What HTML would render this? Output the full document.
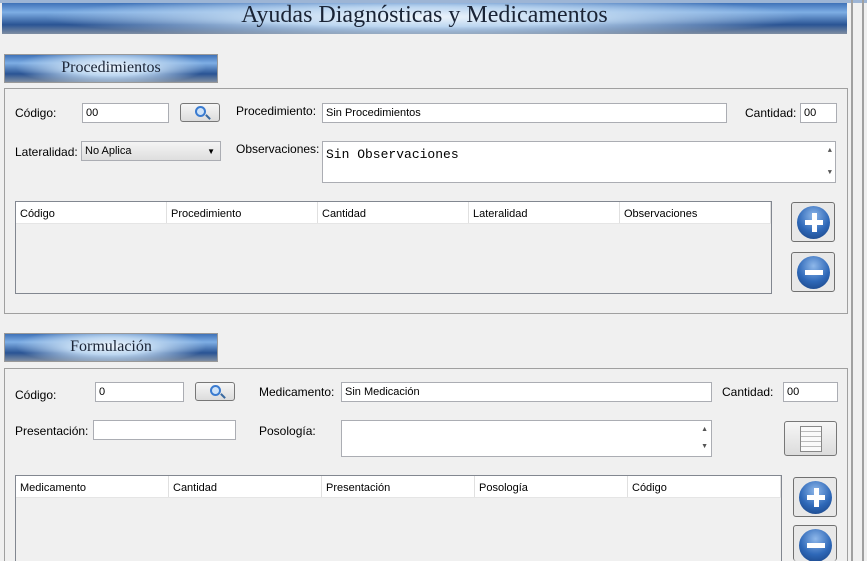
<!DOCTYPE html>
<html style="margin:0;width:867px;height:561px;overflow:hidden"><head><meta charset="utf-8"><style>
*{box-sizing:border-box}
body{margin:0;width:867px;height:561px;overflow:hidden;background:#f0f0f0;font-family:"Liberation Sans",sans-serif;font-size:12px;color:#000;position:relative}
.a{position:absolute}
.bg{background:radial-gradient(ellipse 45% 70% at 50% 45%,#eef5fc 0%,#bcd6f0 45%,rgba(120,160,210,0) 100%),linear-gradient(180deg,#3f72b8 0%,#7eaee4 30%,#2a5494 70%,#7f8ea2 100%)}
.title{font-family:"Liberation Serif",serif;color:#1a2436;text-align:center}
.in{background:#fff;border:1px solid #abadb3;padding:2px 3px;font-size:11px;height:20px;line-height:14px}
.lbl{font-size:12px}
.btn{border:1px solid #777;border-radius:3px;background:linear-gradient(#f6f6f6,#dcdcdc)}
.grid{border:1px solid #828790;background:#f0f0f0;overflow:hidden}
.hdr{height:22px;background:#fff;border-bottom:1px solid #e5e5e5;display:flex}
.hdr div{flex:1;border-right:1px solid #e0e0e0;padding:6px 4px;font-size:11px}
.rb{width:44px;height:40px;border:1px solid #707070;border-radius:3px;background:#e8e8e8;overflow:hidden}
.circ{position:absolute;left:5px;top:3px;width:33px;height:33px;border-radius:50%;background:radial-gradient(circle at 50% 30%,#8fb8ea 0%,#2e68b8 55%,#173e7c 100%)}
.mag{position:absolute;left:14px;top:2px;width:11px;height:11px;border:2px solid #3a7bd0;border-radius:50%;background:#cfe3f8}
.mag:after{content:"";position:absolute;left:8px;top:8px;width:6px;height:2px;background:#3a6aa0;transform:rotate(45deg)}
</style></head><body>
<div class="a" style="left:0;top:0;width:867px;height:3px;background:#9db5d5"></div>
<div class="a bg" style="left:2px;top:3px;width:845px;height:31px"></div>
<div class="a title" style="left:2px;top:1px;width:845px;font-size:24px;line-height:28px">Ayudas Diagnósticas y Medicamentos</div>
<div class="a" style="left:851px;top:0;width:2px;height:561px;background:#a0a0a0"></div>
<div class="a" style="left:862px;top:0;width:2px;height:561px;background:#a0a0a0"></div>

<div class="a bg" style="left:4px;top:54px;width:214px;height:29px;border:1px solid #999"></div>
<div class="a title" style="left:4px;top:59px;width:214px;font-size:16px">Procedimientos</div>
<div class="a" style="left:4px;top:88px;width:844px;height:226px;border:1px solid #a0a0a0"></div>
<div class="a lbl" style="left:15px;top:106px">Código:</div>
<div class="a in" style="left:82px;top:103px;width:87px">00</div>
<div class="a btn" style="left:180px;top:103px;width:40px;height:19px"><div class="mag"></div></div>
<div class="a lbl" style="left:236px;top:104px">Procedimiento:</div>
<div class="a in" style="left:322px;top:103px;width:405px">Sin Procedimientos</div>
<div class="a lbl" style="left:745px;top:106px">Cantidad:</div>
<div class="a in" style="left:800px;top:103px;width:37px">00</div>
<div class="a lbl" style="left:15px;top:145px">Lateralidad:</div>
<div class="a in" style="left:81px;top:141px;width:140px;background:linear-gradient(#f4f4f4,#dedede)">No Aplica<span style="position:absolute;right:5px;top:3px;font-size:8px">&#9660;</span></div>
<div class="a lbl" style="left:236px;top:142px">Observaciones:</div>
<div class="a in" style="left:322px;top:141px;width:514px;height:42px;font-family:'Liberation Mono',monospace;font-size:13px;padding-top:6px">Sin Observaciones<span style="position:absolute;right:3px;top:2px;font-size:7px;color:#555">&#9650;</span><span style="position:absolute;right:3px;bottom:2px;font-size:7px;color:#555">&#9660;</span></div>
<div class="a grid" style="left:15px;top:201px;width:757px;height:93px"><div class="hdr"><div>Código</div><div>Procedimiento</div><div>Cantidad</div><div>Lateralidad</div><div>Observaciones</div></div></div>
<div class="a rb" style="left:791px;top:202px"><div class="circ"></div><div class="a" style="left:13px;top:17px;width:18px;height:5px;background:#fff"></div><div class="a" style="left:19.5px;top:10px;width:5px;height:19px;background:#fff"></div></div>
<div class="a rb" style="left:791px;top:252px"><div class="circ"></div><div class="a" style="left:13px;top:17px;width:18px;height:5px;background:#fff"></div></div>

<div class="a bg" style="left:4px;top:333px;width:214px;height:29px;border:1px solid #999"></div>
<div class="a title" style="left:4px;top:338px;width:214px;font-size:16px">Formulación</div>
<div class="a" style="left:4px;top:368px;width:844px;height:200px;border:1px solid #a0a0a0"></div>
<div class="a lbl" style="left:15px;top:388px">Código:</div>
<div class="a in" style="left:95px;top:382px;width:89px">0</div>
<div class="a btn" style="left:195px;top:382px;width:40px;height:19px"><div class="mag"></div></div>
<div class="a lbl" style="left:259px;top:385px">Medicamento:</div>
<div class="a in" style="left:341px;top:382px;width:371px">Sin Medicación</div>
<div class="a lbl" style="left:722px;top:385px">Cantidad:</div>
<div class="a in" style="left:783px;top:382px;width:55px">00</div>
<div class="a lbl" style="left:15px;top:424px">Presentación:</div>
<div class="a in" style="left:93px;top:420px;width:143px"></div>
<div class="a lbl" style="left:259px;top:424px">Posología:</div>
<div class="a in" style="left:341px;top:420px;width:371px;height:37px"><span style="position:absolute;right:3px;top:2px;font-size:7px;color:#555">&#9650;</span><span style="position:absolute;right:3px;bottom:2px;font-size:7px;color:#555">&#9660;</span></div>
<div class="a btn" style="left:784px;top:421px;width:53px;height:35px"><div class="a" style="left:15px;top:4px;width:22px;height:26px;background:#fafafa;border:1px solid #888;background-image:repeating-linear-gradient(#fafafa 0 4px,#bbb 4px 5px)"></div></div>
<div class="a grid" style="left:15px;top:475px;width:767px;height:86px;border-bottom:none"><div class="hdr"><div>Medicamento</div><div>Cantidad</div><div>Presentación</div><div>Posología</div><div>Código</div></div></div>
<div class="a rb" style="left:793px;top:477px"><div class="circ"></div><div class="a" style="left:13px;top:17px;width:18px;height:5px;background:#fff"></div><div class="a" style="left:19.5px;top:10px;width:5px;height:19px;background:#fff"></div></div>
<div class="a rb" style="left:793px;top:525px;height:36px;border-bottom:none"><div class="circ"></div><div class="a" style="left:13px;top:17px;width:18px;height:5px;background:#fff"></div></div>
</body></html>
